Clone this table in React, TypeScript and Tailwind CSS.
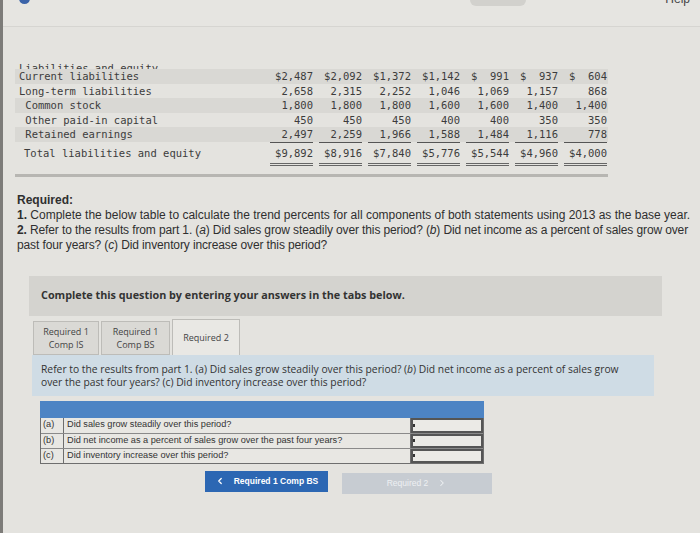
import { ChevronLeft, ChevronRight } from "lucide-react";

const rows = [
  { label: "Current liabilities", vals: ["$2,487", "$2,092", "$1,372", "$1,142", "$  991", "$  937", "$  604"], stripe: true },
  { label: "Long-term liabilities", vals: ["2,658", "2,315", "2,252", "1,046", "1,069", "1,157", "868"], stripe: false },
  { label: " Common stock", vals: ["1,800", "1,800", "1,800", "1,600", "1,600", "1,400", "1,400"], stripe: true },
  { label: " Other paid-in capital", vals: ["450", "450", "450", "400", "400", "350", "350"], stripe: false },
  { label: " Retained earnings", vals: ["2,497", "2,259", "1,966", "1,588", "1,484", "1,116", "778"], stripe: true },
];

const totals = ["$9,892", "$8,916", "$7,840", "$5,776", "$5,544", "$4,960", "$4,000"];

const questions = [
  { key: "(a)", text: "Did sales grow steadily over this period?" },
  { key: "(b)", text: "Did net income as a percent of sales grow over the past four years?" },
  { key: "(c)", text: "Did inventory increase over this period?" },
];

function NumRow({ label, vals, stripe }: { label: string; vals: string[]; stripe: boolean }) {
  return (
    <div className={`flex h-[14.5px] items-center ${stripe ? "bg-[#d9d8d4]" : ""}`}>
      <div className="w-[249px] whitespace-pre pl-[4px]">{label}</div>
      {vals.map((v, i) => (
        <div key={i} className="w-[49px] whitespace-pre text-right">
          {v}
        </div>
      ))}
    </div>
  );
}

export default function App() {
  return (
    <div className="relative h-[533px] w-[700px] overflow-hidden border-l-[3px] border-[#7d7c79] bg-[#e4e3df] text-[#333]">
      {/* top bar, mostly scrolled away */}
      <div className="flex h-[27px] items-start justify-between border-b border-[#d6d5d1] bg-[#e6e5e1] pl-[16px] pr-[10px]">
        <div className="-mt-[7px] h-[11px] w-[11px] rounded-full bg-[#3b63a8]" />
        <div className="-mt-[4px] ml-[300px] h-[10px] w-[56px] rounded-b-[6px] bg-[#d2d1cd]" />
        <div className="-mt-[10px] text-[12px] text-[#444] [font-family:'Liberation_Sans',sans-serif]">Help</div>
      </div>

      {/* balance sheet extract */}
      <div className="ml-[12px] mt-[34px] w-[593px] text-[10.5px] leading-none text-[#3c3c3c] [font-family:'DejaVu_Sans_Mono',monospace]">
        <div className="flex h-[8px] items-end overflow-hidden pl-[4px]">
          <span className="translate-y-[4px]">Liabilities and equity</span>
        </div>
        {rows.map((r) => (
          <NumRow key={r.label} {...r} />
        ))}
        <div className="flex">
          <div className="w-[249px]" />
          {totals.map((_, i) => (
            <div key={i} className="flex w-[49px] justify-end">
              <div className="h-px w-[43px] bg-[#555]" />
            </div>
          ))}
        </div>
        <div className="mt-[3px] flex h-[15px] items-center">
          <div className="w-[249px] pl-[9px]">Total liabilities and equity</div>
          {totals.map((v, i) => (
            <div key={i} className="w-[49px] text-right">
              {v}
            </div>
          ))}
        </div>
        <div className="mt-[2px] flex">
          <div className="w-[249px]" />
          {totals.map((_, i) => (
            <div key={i} className="flex w-[49px] justify-end">
              <div className="h-[3px] w-[43px] border-y border-[#666]" />
            </div>
          ))}
        </div>
        <div className="mt-[8px] h-[3px] bg-[#b7b6b2]" />
      </div>

      {/* required text */}
      <div className="ml-[14px] mt-[16px] text-[12px] leading-[15px] text-[#2f2f2f] [font-family:'Liberation_Sans',sans-serif]">
        <div className="font-bold">Required:</div>
        <div className="whitespace-nowrap">
          <b>1.</b> Complete the below table to calculate the trend percents for all components of both statements using 2013 as the base year.
        </div>
        <div className="whitespace-nowrap tracking-[-0.12px]">
          <b>2.</b> Refer to the results from part 1. (<i>a</i>) Did sales grow steadily over this period? (<i>b</i>) Did net income as a percent of sales grow over
          <br />
          past four years? (<i>c</i>) Did inventory increase over this period?
        </div>
      </div>

      {/* question box */}
      <div className="ml-[26px] mt-[23px] w-[633px] [font-family:'Open_Sans',sans-serif]">
        <div className="flex h-[40px] items-center bg-[#d4d3cf] pl-[12px] text-[10.8px] font-bold text-[#333]">
          Complete this question by entering your answers in the tabs below.
        </div>

        <div className="mt-[3px] flex items-end pl-[4px] text-[9px] leading-[13px] text-[#444]">
          <div className="flex h-[34px] w-[66px] flex-col items-center justify-center border border-[#bdbcb8] bg-[#dad9d5]">
            <span>Required 1</span>
            <span>Comp IS</span>
          </div>
          <div className="ml-[2px] flex h-[34px] w-[69px] flex-col items-center justify-center border border-[#bdbcb8] bg-[#dad9d5]">
            <span>Required 1</span>
            <span>Comp BS</span>
          </div>
          <div className="ml-[2px] flex h-[36px] w-[68px] items-center justify-center border border-b-0 border-[#bdbcb8] bg-[#e9e8e4]">
            Required 2
          </div>
        </div>

        <div className="ml-[3px] w-[622px] whitespace-nowrap bg-[#cfdce5] px-[9px] pb-[7px] pt-[8px] text-[10.3px] leading-[13px] text-[#333]">
          Refer to the results from part 1. (a) Did sales grow steadily over this period? (<i>b</i>) Did net income as a percent of sales grow
          <br />
          over the past four years? (c) Did inventory increase over this period?
        </div>

        <div className="ml-[11px] mt-[5px] w-[444px] text-[9.2px] text-[#333] [font-family:'Liberation_Sans',sans-serif]">
          <div className="h-[17px] bg-[#4d84c4]" />
          <div className="border-x border-b border-[#6e6e6e] bg-[#e8e7e3]">
            {questions.map((q, i) => (
              <div key={q.key} className={`flex h-[15px] ${i > 0 ? "border-t border-[#8a8a8a]" : ""}`}>
                <div className="flex w-[23px] items-center border-r border-[#6e6e6e] pl-[2px]">{q.key}</div>
                <div className="flex w-[347px] items-center border-r border-[#6e6e6e] pl-[3px]">{q.text}</div>
                <div className="flex flex-1 items-center border-2 border-[#555] bg-[#ebeae6]">
                  <div className="h-[3px] w-[2px] bg-[#333]" />
                </div>
              </div>
            ))}
          </div>
        </div>

        <div className="mt-[7px] flex pl-[176px] text-[8.5px] font-bold [font-family:'Liberation_Sans',sans-serif]">
          <button className="flex h-[21px] w-[123px] items-center justify-center gap-[9px] bg-[#2c67b3] text-white">
            <ChevronLeft size={10} strokeWidth={3} />
            <span>Required 1 Comp BS</span>
          </button>
          <button className="ml-[14px] mt-[2px] flex h-[21px] w-[150px] items-center justify-center gap-[9px] bg-[#c7ccd2] font-normal text-[#eef0f2]">
            <span>Required 2</span>
            <ChevronRight size={10} strokeWidth={2.5} />
          </button>
        </div>
      </div>
    </div>
  );
}
